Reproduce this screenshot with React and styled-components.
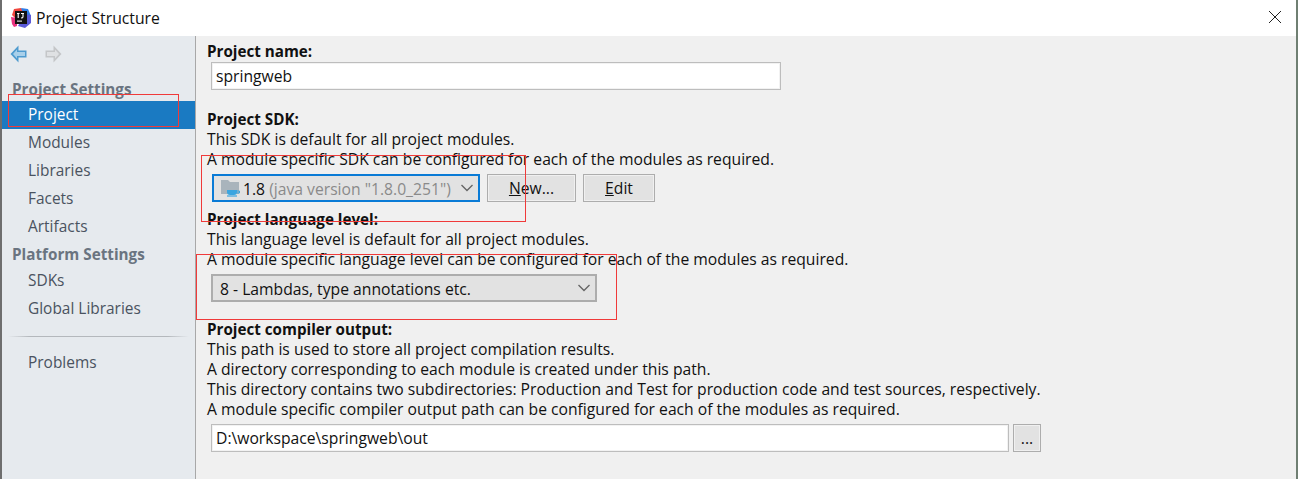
import React from 'react';
import styled, { createGlobalStyle } from 'styled-components';

const GlobalStyle = createGlobalStyle`
  html, body {
    margin: 0;
    padding: 0;
    background: #fff;
  }
  body {
    font-family: "Open Sans", "Noto Sans", sans-serif;
  }
`;

const Window = styled.div`
  position: relative;
  width: 1298px;
  height: 479px;
  box-sizing: border-box;
  border-left: 2px solid #6e6e6e;
  border-right: 2px solid #6f7f72;
  display: flex;
  flex-direction: column;
  overflow: hidden;
  font-size: 15.7px;
  color: #111;
`;

const TitleBar = styled.div`
  height: 36px;
  flex: none;
  background: #fff;
  display: flex;
  align-items: center;
  padding: 0 10px 0 9px;
  gap: 5px;
`;

const WindowTitle = styled.span`
  flex: 1;
  font-size: 15.75px;
`;

const CloseButton = styled.svg`
  width: 14px;
  height: 14px;
  margin: 0 4px 2px 0;
`;

const Body = styled.div`
  flex: 1;
  display: flex;
  min-height: 0;
`;

const Sidebar = styled.div`
  width: 194px;
  flex: none;
  box-sizing: border-box;
  background: #e6eaee;
  border-right: 1px solid #a8a8a8;
  padding-top: 6px;
`;

const NavButtons = styled.div`
  height: 24px;
  display: flex;
  align-items: center;
  gap: 18px;
  padding-left: 8px;
  margin-bottom: 13px;
`;

const SectionTitle = styled.div`
  height: 22px;
  line-height: 20px;
  margin-top: ${props => props.$top || 0}px;
  margin-bottom: ${props => props.$bottom || 0}px;
  padding-left: 10px;
  font-weight: 700;
  color: #6a7480;
  font-size: 15.26px;
`;

const NavItem = styled.div`
  height: 28px;
  line-height: 27px;
  padding-left: 26px;
  font-size: 15.45px;
  color: ${props => (props.$active ? '#fff' : '#4a5360')};
  background: ${props => (props.$active ? '#1a7ac2' : 'transparent')};
`;

const NavDivider = styled.div`
  height: 1px;
  margin: 13px 6px 12px 6px;
  background: linear-gradient(to right, #e6eaee, #b4b8bc 12%, #b4b8bc 88%, #e6eaee);
`;

const Content = styled.div`
  flex: 1;
  background: #f0f0f0;
  padding: 6px 0 0 11px;
`;

const Label = styled.div`
  font-weight: 700;
  font-size: 15.2px;
  line-height: 19px;
  margin-top: ${props => props.$top || 0}px;
`;

const Hint = styled.div`
  line-height: 20px;
`;

const Row = styled.div`
  display: flex;
  align-items: center;
  gap: ${props => props.$gap || 7}px;
  margin: ${props => props.$top ?? 5}px 0 0 4px;
`;

const TextField = styled.div`
  width: ${props => props.$width}px;
  height: 28px;
  box-sizing: border-box;
  background: #fff;
  border: 1px solid #bdbdbd;
  box-shadow: inset 0 0 0 1px #f2f2f2;
  line-height: 26px;
  padding-left: 4px;
`;

const Combo = styled.div`
  width: ${props => props.$width}px;
  height: 28px;
  box-sizing: border-box;
  margin-left: ${props => (props.$focused ? 1 : 0)}px;
  background: #e2e2e2;
  border: ${props => (props.$focused ? '2px solid #0a7bd6' : '2px solid #adadad')};
  display: flex;
  align-items: center;
  padding: 0 5px 0 7px;
  gap: 2px;
`;

const ComboText = styled.span`
  flex: 1;
  white-space: nowrap;
  padding-top: 1px;
`;

const Muted = styled.span`
  color: #8a8a8a;
`;

const Button = styled.div`
  width: ${props => props.$width}px;
  height: 28px;
  box-sizing: border-box;
  background: #e2e2e2;
  border: 1px solid #adadad;
  box-shadow: inset 0 0 0 1px #f0f0f0;
  display: flex;
  align-items: center;
  justify-content: center;
`;

const Mnemonic = styled.span`
  text-decoration: underline;
`;

const Annotation = styled.div`
  position: absolute;
  left: ${props => props.$x}px;
  top: ${props => props.$y}px;
  width: ${props => props.$w}px;
  height: ${props => props.$h}px;
  box-sizing: border-box;
  border: 1px solid #f03a3a;
  pointer-events: none;
`;

const AppIcon = () => (
  <svg width="20" height="20" viewBox="0 0 20 20">
    <path d="M1 7 L3 1 L10 0 L13 4 L6 12 Z" fill="#f0473e" />
    <path d="M10 0 L17 1 L20 8 L14 9 Z" fill="#2f7fe8" />
    <path d="M0 9 L6 10 L6 18 L3 19 L1 16 Z" fill="#e9337f" />
    <path d="M14 6 L20 7 L20 15 L14 20 L7 18 Z" fill="#5a5ad8" />
    <rect x="4" y="3" width="12" height="13" fill="#111" />
    <path d="M6 5.5 H8.5 M7.2 5.5 V10 M10 5.5 H13 M12 5.5 V9 Q12 10 10 10" stroke="#fff" strokeWidth="1.1" fill="none" />
    <rect x="6" y="12.6" width="5" height="1" fill="#fff" />
  </svg>
);

const BackIcon = () => (
  <svg width="17" height="18" viewBox="0 0 17 18">
    <path d="M8.5 0.5 L0.5 9 L8.5 17.5 V12.5 H16.5 V5.5 H8.5 Z" fill="#4f9bcf" />
    <path d="M7 4.5 L3 9 L7 13.5 V11 H15 V7 H7 Z" fill="#a9d0ea" />
  </svg>
);

const ForwardIcon = () => (
  <svg width="17" height="18" viewBox="0 0 17 18">
    <path d="M8.5 0.5 L16.5 9 L8.5 17.5 V12.5 H0.5 V5.5 H8.5 Z" fill="#c4c6c8" />
    <path d="M10 4.5 L14 9 L10 13.5 V11 H2 V7 H10 Z" fill="#dfe1e3" />
  </svg>
);

const Chevron = () => (
  <svg width="12" height="8" viewBox="0 0 12 8">
    <path d="M0.5 1 L6 6.5 L11.5 1" fill="none" stroke="#666" strokeWidth="1.4" />
  </svg>
);

const SdkIcon = () => (
  <svg width="20" height="18" viewBox="0 0 20 18">
    <path d="M0 1 H7 L9 3 H18 V15 H0 Z" fill="#a9b4bc" />
    <path d="M6 11 H16 V13 Q16 16 13 16 H9 Q6 16 6 13 Z" fill="#3aa5e0" />
    <path d="M16 12 H18.5 V14 H16" fill="none" stroke="#3aa5e0" strokeWidth="1" />
    <rect x="6" y="16.4" width="10" height="1.2" fill="#3aa5e0" />
  </svg>
);

export default function App() {
  return (
    <Window>
      <GlobalStyle />
      <TitleBar>
        <AppIcon />
        <WindowTitle>Project Structure</WindowTitle>
        <CloseButton viewBox="0 0 14 14">
          <path d="M1 1 L13 13 M13 1 L1 13" stroke="#222" strokeWidth="1" />
        </CloseButton>
      </TitleBar>
      <Body>
        <Sidebar>
          <NavButtons>
            <BackIcon />
            <ForwardIcon />
          </NavButtons>
          <SectionTitle>Project Settings</SectionTitle>
          <NavItem $active>Project</NavItem>
          <NavItem>Modules</NavItem>
          <NavItem>Libraries</NavItem>
          <NavItem>Facets</NavItem>
          <NavItem>Artifacts</NavItem>
          <SectionTitle $top={3} $bottom={1}>Platform Settings</SectionTitle>
          <NavItem>SDKs</NavItem>
          <NavItem>Global Libraries</NavItem>
          <NavDivider />
          <NavItem>Problems</NavItem>
        </Sidebar>
        <Content>
          <Label>Project name:</Label>
          <Row $top={1}>
            <TextField $width={570}>springweb</TextField>
          </Row>
          <Label $top={20}>Project SDK:</Label>
          <Hint>This SDK is default for all project modules.</Hint>
          <Hint>A module specific SDK can be configured for each of the modules as required.</Hint>
          <Row>
            <Combo $width={268} $focused>
              <SdkIcon />
              <ComboText>1.8 <Muted>(java version "1.8.0_251")</Muted></ComboText>
              <Chevron />
            </Combo>
            <Button $width={89}><span><Mnemonic>N</Mnemonic>ew...</span></Button>
            <Button $width={72}><span><Mnemonic>E</Mnemonic>dit</span></Button>
          </Row>
          <Label $top={8}>Project language level:</Label>
          <Hint>This language level is default for all project modules.</Hint>
          <Hint>A module specific language level can be configured for each of the modules as required.</Hint>
          <Row>
            <Combo $width={386}>
              <ComboText>8 - Lambdas, type annotations etc.</ComboText>
              <Chevron />
            </Combo>
          </Row>
          <Label $top={18}>Project compiler output:</Label>
          <Hint>This path is used to store all project compilation results.</Hint>
          <Hint>A directory corresponding to each module is created under this path.</Hint>
          <Hint>This directory contains two subdirectories: Production and Test for production code and test sources, respectively.</Hint>
          <Hint>A module specific compiler output path can be configured for each of the modules as required.</Hint>
          <Row $gap={4}>
            <TextField $width={798}>D:\workspace\springweb\out</TextField>
            <Button $width={28}>...</Button>
          </Row>
        </Content>
      </Body>
      <Annotation $x={6} $y={94} $w={171} $h={33} />
      <Annotation $x={199} $y={155} $w={325} $h={67} />
      <Annotation $x={194} $y={254} $w={421} $h={66} />
    </Window>
  );
}
